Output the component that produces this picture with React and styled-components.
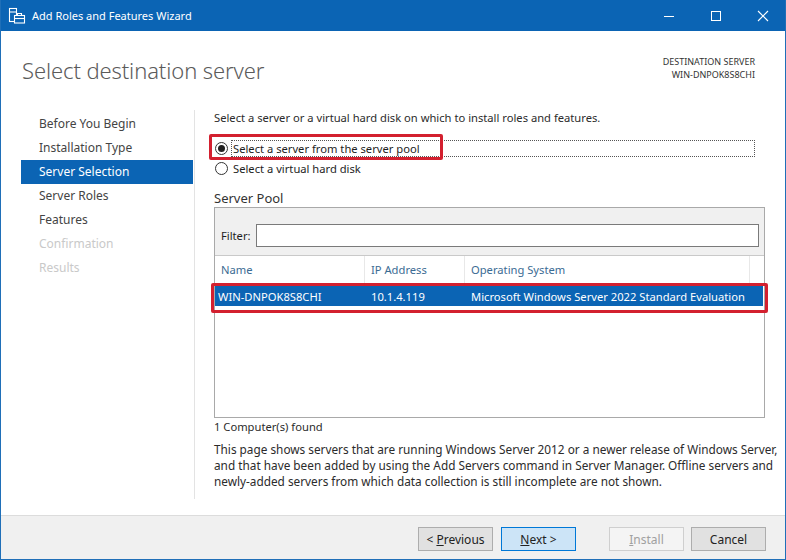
import React from 'react';
import styled, { createGlobalStyle } from 'styled-components';

const GlobalStyle = createGlobalStyle`
    html, body {
        margin: 0;
        padding: 0;
        background: #ffffff;
    }
    * {
        box-sizing: border-box;
    }
`;

const BLUE = '#0b64b4';
const FONT = '"Segoe UI", "Noto Sans", "Open Sans", sans-serif';

const Window = styled.div`
    width: 786px;
    height: 560px;
    display: flex;
    flex-direction: column;
    border: 1px solid #1f6fb8;
    border-top: none;
    font-family: ${FONT};
    color: #1e1e1e;
    background: #fff;
    position: relative;
    overflow: hidden;
`;

const TitleBar = styled.div`
    height: 31px;
    background: ${BLUE};
    display: flex;
    align-items: center;
    color: #fff;
    padding-left: 8px;
    margin: 0 -1px;
`;

const TitleText = styled.span`
    font-size: 11px;
    margin-left: 6px;
    flex: 1;
`;

const WinButton = styled.div`
    width: 47px;
    height: 31px;
    display: flex;
    align-items: center;
    justify-content: center;
`;

const Header = styled.div`
    height: 78px;
    display: flex;
    justify-content: space-between;
    padding: 24px 30px 0 21px;
`;

const PageTitle = styled.h1`
    margin: 0;
    font-size: 22px;
    font-weight: 300;
    color: #5b5b5b;
    line-height: 30px;
    letter-spacing: -0.1px;
`;

const DestInfo = styled.div`
    text-align: right;
    font-size: 9px;
    line-height: 13px;
    color: #333;
`;

const Main = styled.div`
    flex: 1;
    display: flex;
    padding: 1px 20px 0 20px;
    min-height: 0;
`;

const Nav = styled.div`
    width: 172px;
    flex-shrink: 0;
    padding-top: 2px;
    display: flex;
    flex-direction: column;
`;

const NavItem = styled.div`
    height: 24px;
    line-height: 24px;
    padding-left: 18px;
    font-size: 12px;
    background: ${(p) => (p.$active ? BLUE : 'transparent')};
    color: ${(p) => (p.$active ? '#fff' : p.$disabled ? '#c9c9c9' : '#444')};
`;

const Separator = styled.div`
    width: 1px;
    flex-shrink: 0;
    background: #e3e3e3;
    margin: 0 0 16px 1px;
`;

const Content = styled.div`
    flex: 1;
    min-width: 0;
    padding-left: 19px;
    display: flex;
    flex-direction: column;
    font-size: 11.2px;
`;

const Text = styled.div`
    line-height: 16px;
    color: #2b2b2b;
`;

const RadioGroup = styled.div`
    margin-top: 12px;
    display: flex;
    flex-direction: column;
`;

const RadioRow = styled.label`
    height: 20px;
    display: flex;
    align-items: center;
    padding-left: 1px;
`;

const RadioCircle = styled.span`
    width: 13px;
    height: 13px;
    flex-shrink: 0;
    border-radius: 50%;
    border: 1px solid #333;
    display: flex;
    align-items: center;
    justify-content: center;
    background: #fff;
    &::after {
        content: '';
        width: 7px;
        height: 7px;
        border-radius: 50%;
        background: ${(p) => (p.$checked ? '#222' : 'transparent')};
    }
`;

const RadioLabel = styled.span`
    margin-left: 3px;
    padding: 0 3px 0 1px;
    line-height: 15px;
    flex: ${(p) => (p.$focused ? 1 : 'none')};
    border: 1px dotted ${(p) => (p.$focused ? '#555' : 'transparent')};
    margin-right: ${(p) => (p.$focused ? '10px' : 0)};
`;

const SectionLabel = styled.div`
    margin-top: 12px;
    font-size: 13px;
    line-height: 16px;
    color: #333;
`;

const PoolBox = styled.div`
    margin-top: 1px;
    height: 211px;
    border: 1px solid #a9a9a9;
    display: flex;
    flex-direction: column;
`;

const FilterBar = styled.div`
    height: 48px;
    background: #f0f0f0;
    border-bottom: 1px solid #c9c9c9;
    display: flex;
    align-items: flex-end;
    padding: 0 5px 8px 6px;
    gap: 5px;
`;

const FilterLabel = styled.span`
    line-height: 23px;
`;

const FilterInput = styled.div`
    flex: 1;
    height: 23px;
    border: 1px solid #7a7a7a;
    background: #fff;
`;

const Columns = styled.div`
    display: grid;
    grid-template-columns: 150px 100px 285px 1fr;
    height: 27px;
    align-items: center;
    color: #3b6b93;
`;

const ColHead = styled.div`
    padding-left: 6px;
    height: 100%;
    display: flex;
    align-items: center;
    border-right: 1px solid ${(p) => (p.$last ? 'transparent' : '#e8e8e8')};
`;

const Row = styled.div`
    display: grid;
    grid-template-columns: 150px 100px 1fr;
    height: 20px;
    margin: 3px 1px 0 0;
    align-items: center;
    background: ${(p) => (p.$selected ? BLUE : 'transparent')};
    color: ${(p) => (p.$selected ? '#fff' : '#222')};
`;

const Cell = styled.div`
    padding-left: ${(p) => p.$pad || 6}px;
    white-space: nowrap;
`;

const Found = styled.div`
    margin-top: 1px;
    line-height: 16px;
    color: #2b2b2b;
`;

const Description = styled.p`
    margin: 6px -30px 0 0;
    font-size: 11.8px;
    line-height: 16px;
    color: #2b2b2b;
    white-space: nowrap;
`;

const Footer = styled.div`
    height: 44px;
    flex-shrink: 0;
    border-top: 1px solid #dcdcdc;
    background: #f0f0f0;
    display: flex;
    justify-content: flex-end;
    align-items: flex-start;
    padding: 11px 19px 0 0;
`;

const Button = styled.button`
    width: 75px;
    height: 24px;
    font-family: ${FONT};
    font-size: 12px;
    margin-left: ${(p) => p.$gap || 0}px;
    border: 1px solid ${(p) => (p.$primary ? '#0078d7' : p.$disabled ? '#cfcfcf' : '#adadad')};
    background: ${(p) => (p.$primary ? '#cce4f7' : p.$disabled ? '#f4f4f4' : '#e1e1e1')};
    color: ${(p) => (p.$disabled ? '#a0a0a0' : '#222')};
    padding: 0;
    u {
        text-decoration: underline;
    }
`;

const Highlight = styled.div`
    position: absolute;
    border: 3px solid #d3202f;
    border-radius: 2px;
    pointer-events: none;
`;

const AppIcon = () => (
    <svg width="18" height="18" viewBox="0 0 18 18" fill="none" stroke="#fff" strokeWidth="1.1">
        <rect x="1.5" y="1.5" width="7" height="13" />
        <line x1="1.5" y1="5" x2="8.5" y2="5" />
        <rect x="6.5" y="8.5" width="10" height="7.5" fill={BLUE} />
        <path d="M9.5 8.5V6.5h4v2" />
        <line x1="6.5" y1="11.5" x2="16.5" y2="11.5" />
    </svg>
);

const MinIcon = () => (
    <svg width="12" height="12" viewBox="0 0 12 12" stroke="#fff" strokeWidth="1">
        <line x1="1" y1="6.5" x2="11" y2="6.5" />
    </svg>
);

const MaxIcon = () => (
    <svg width="12" height="12" viewBox="0 0 12 12" fill="none" stroke="#fff" strokeWidth="1">
        <rect x="1.5" y="1.5" width="9" height="9" />
    </svg>
);

const CloseIcon = () => (
    <svg width="12" height="12" viewBox="0 0 12 12" stroke="#fff" strokeWidth="1.1">
        <line x1="1" y1="1" x2="11" y2="11" />
        <line x1="11" y1="1" x2="1" y2="11" />
    </svg>
);

const steps = [
    { label: 'Before You Begin' },
    { label: 'Installation Type' },
    { label: 'Server Selection', active: true },
    { label: 'Server Roles' },
    { label: 'Features' },
    { label: 'Confirmation', disabled: true },
    { label: 'Results', disabled: true },
];

const servers = [
    { name: 'WIN-DNPOK8S8CHI', ip: '10.1.4.119', os: 'Microsoft Windows Server 2022 Standard Evaluation' },
];

const descriptionLines = [
    'This page shows servers that are running Windows Server 2012 or a newer release of Windows Server,',
    'and that have been added by using the Add Servers command in Server Manager. Offline servers and',
    'newly-added servers from which data collection is still incomplete are not shown.',
];

export default function App() {
    return (
        <>
            <GlobalStyle />
            <Window>
                <TitleBar>
                    <AppIcon />
                    <TitleText>Add Roles and Features Wizard</TitleText>
                    <WinButton><MinIcon /></WinButton>
                    <WinButton><MaxIcon /></WinButton>
                    <WinButton><CloseIcon /></WinButton>
                </TitleBar>
                <Header>
                    <PageTitle>Select destination server</PageTitle>
                    <DestInfo>
                        DESTINATION SERVER
                        <br />
                        WIN-DNPOK8S8CHI
                    </DestInfo>
                </Header>
                <Main>
                    <Nav>
                        {steps.map((s) => (
                            <NavItem key={s.label} $active={s.active} $disabled={s.disabled}>
                                {s.label}
                            </NavItem>
                        ))}
                    </Nav>
                    <Separator />
                    <Content>
                        <Text>Select a server or a virtual hard disk on which to install roles and features.</Text>
                        <RadioGroup>
                            <RadioRow>
                                <RadioCircle $checked />
                                <RadioLabel $focused>Select a server from the server pool</RadioLabel>
                            </RadioRow>
                            <RadioRow>
                                <RadioCircle />
                                <RadioLabel>Select a virtual hard disk</RadioLabel>
                            </RadioRow>
                        </RadioGroup>
                        <SectionLabel>Server Pool</SectionLabel>
                        <PoolBox>
                            <FilterBar>
                                <FilterLabel>Filter:</FilterLabel>
                                <FilterInput />
                            </FilterBar>
                            <Columns>
                                <ColHead>Name</ColHead>
                                <ColHead>IP Address</ColHead>
                                <ColHead>Operating System</ColHead>
                                <ColHead $last />
                            </Columns>
                            {servers.map((s) => (
                                <Row key={s.name} $selected>
                                    <Cell $pad={3}>{s.name}</Cell>
                                    <Cell>{s.ip}</Cell>
                                    <Cell>{s.os}</Cell>
                                </Row>
                            ))}
                        </PoolBox>
                        <Found>1 Computer(s) found</Found>
                        <Description>
                            {descriptionLines.map((line) => (
                                <React.Fragment key={line}>
                                    {line}
                                    <br />
                                </React.Fragment>
                            ))}
                        </Description>
                    </Content>
                </Main>
                <Footer>
                    <Button>&lt; <u>P</u>revious</Button>
                    <Button $primary $gap={8}><u>N</u>ext &gt;</Button>
                    <Button $disabled $gap={33}><u>I</u>nstall</Button>
                    <Button $gap={7}>Cancel</Button>
                </Footer>
                <Highlight style={{ left: 208, top: 134, width: 234, height: 26 }} />
                <Highlight style={{ left: 210, top: 283, width: 557, height: 30 }} />
            </Window>
        </>
    );
}
